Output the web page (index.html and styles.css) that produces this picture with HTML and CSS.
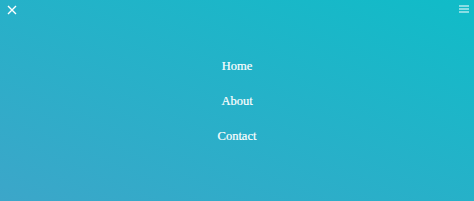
FILE: index.html
```html
<!DOCTYPE html>
<html lang="en">
<head>
    <meta charset="UTF-8">
    <title>Menu</title>
    <link rel="stylesheet" href="styles.css">
</head>
<body>
    <!-- Menu plein écran -->
    <div class="overlay">
        <div class="top-bar">
            <a href="#" class="close-btn" aria-label="Close">
                <svg width="10" height="10" viewBox="0 0 10 10">
                    <path d="M1 1 L9 9 M9 1 L1 9" stroke="#fff" stroke-width="1.4" fill="none"/>
                </svg>
            </a>
            <a href="#" class="menu-btn" aria-label="Menu">
                <svg width="10" height="8" viewBox="0 0 10 8">
                    <path d="M0 1 H10 M0 4 H10 M0 7 H10" stroke="#fff" stroke-width="1.2" fill="none"/>
                </svg>
            </a>
        </div>

        <nav class="nav">
            <a href="#">Home</a>
            <a href="#">About</a>
            <a href="#">Contact</a>
        </nav>
    </div>
</body>
</html>
```

FILE: styles.css
```css
body {
    margin: 0;
    font-family: 'Liberation Serif', serif;
}

.overlay {
    height: 100vh;
    background: linear-gradient(to top right, #3ca6c9, #10bcc8);
    display: grid;
    grid-template-rows: auto 1fr;
    position: relative;
}

.top-bar {
    display: flex;
    justify-content: space-between;
    padding: 5px 5px 0 7px;
}

.close-btn,
.menu-btn {
    display: flex;
    text-decoration: none;
}

.nav {
    position: absolute;
    inset: 0;
    display: flex;
    flex-direction: column;
    align-items: center;
    justify-content: center;
    gap: 14px;
    padding-top: 2px;
}

.nav a {
    color: white;
    text-decoration: none;
    font-size: 12.5px;
    line-height: 21px;
    -webkit-text-stroke: 0.2px white;
}
```
